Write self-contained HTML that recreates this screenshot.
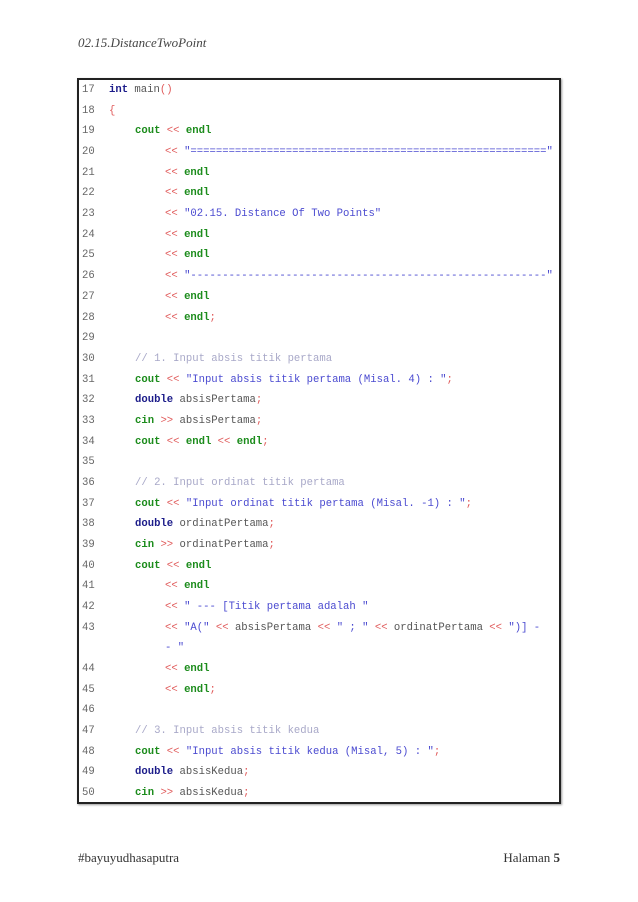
<!DOCTYPE html>
<html><head><meta charset="utf-8"><style>
body{margin:0;background:#fff;width:638px;height:902px;position:relative;overflow:hidden}
.hd{position:absolute;left:78px;top:35px;font:italic 13px "Liberation Serif",serif;color:#444}
.box{position:absolute;left:77px;top:78px;width:480px;height:722px;border:2px solid #222;box-shadow:1px 1px 2px #999}
.r{position:absolute;left:82px;height:20px;line-height:20px;font:10.6px "Liberation Mono",monospace;color:#555;white-space:pre}
.n{display:inline-block;width:27px;color:#666}
.k{color:#1c1c8a;font-weight:bold}.g{color:#1c8c1c;font-weight:bold}.o{color:#e05a5a}.s{color:#4a4ad0}.c{color:#a8a8c8}
.i1{display:inline-block;width:26px}.i2{display:inline-block;width:56px}
.ft{position:absolute;top:850px;font:13px "Liberation Serif",serif;color:#333}
</style></head><body>
<div class="hd">02.15.DistanceTwoPoint</div>
<div class="box"></div>
<div class="r" style="top:84px"><span class="n">17</span><span class="k">int</span> main<span class="o">()</span></div>
<div class="r" style="top:104.7px"><span class="n">18</span><span class="o">{</span></div>
<div class="r" style="top:125.4px"><span class="n">19</span><span class="i1"></span><span class="g">cout</span> <span class="o">&lt;&lt;</span> <span class="g">endl</span></div>
<div class="r" style="top:146px"><span class="n">20</span><span class="i2"></span><span class="o">&lt;&lt;</span> <span class="s">"========================================================"</span></div>
<div class="r" style="top:166.7px"><span class="n">21</span><span class="i2"></span><span class="o">&lt;&lt;</span> <span class="g">endl</span></div>
<div class="r" style="top:187.4px"><span class="n">22</span><span class="i2"></span><span class="o">&lt;&lt;</span> <span class="g">endl</span></div>
<div class="r" style="top:208.1px"><span class="n">23</span><span class="i2"></span><span class="o">&lt;&lt;</span> <span class="s">"02.15. Distance Of Two Points"</span></div>
<div class="r" style="top:228.8px"><span class="n">24</span><span class="i2"></span><span class="o">&lt;&lt;</span> <span class="g">endl</span></div>
<div class="r" style="top:249.4px"><span class="n">25</span><span class="i2"></span><span class="o">&lt;&lt;</span> <span class="g">endl</span></div>
<div class="r" style="top:270.1px"><span class="n">26</span><span class="i2"></span><span class="o">&lt;&lt;</span> <span class="s">"--------------------------------------------------------"</span></div>
<div class="r" style="top:290.8px"><span class="n">27</span><span class="i2"></span><span class="o">&lt;&lt;</span> <span class="g">endl</span></div>
<div class="r" style="top:311.5px"><span class="n">28</span><span class="i2"></span><span class="o">&lt;&lt;</span> <span class="g">endl</span><span class="o">;</span></div>
<div class="r" style="top:332.2px"><span class="n">29</span></div>
<div class="r" style="top:352.8px"><span class="n">30</span><span class="i1"></span><span class="c">// 1. Input absis titik pertama</span></div>
<div class="r" style="top:373.5px"><span class="n">31</span><span class="i1"></span><span class="g">cout</span> <span class="o">&lt;&lt;</span> <span class="s">"Input absis titik pertama (Misal. 4) : "</span><span class="o">;</span></div>
<div class="r" style="top:394.2px"><span class="n">32</span><span class="i1"></span><span class="k">double</span> absisPertama<span class="o">;</span></div>
<div class="r" style="top:414.9px"><span class="n">33</span><span class="i1"></span><span class="g">cin</span> <span class="o">&gt;&gt;</span> absisPertama<span class="o">;</span></div>
<div class="r" style="top:435.6px"><span class="n">34</span><span class="i1"></span><span class="g">cout</span> <span class="o">&lt;&lt;</span> <span class="g">endl</span> <span class="o">&lt;&lt;</span> <span class="g">endl</span><span class="o">;</span></div>
<div class="r" style="top:456.2px"><span class="n">35</span></div>
<div class="r" style="top:476.9px"><span class="n">36</span><span class="i1"></span><span class="c">// 2. Input ordinat titik pertama</span></div>
<div class="r" style="top:497.6px"><span class="n">37</span><span class="i1"></span><span class="g">cout</span> <span class="o">&lt;&lt;</span> <span class="s">"Input ordinat titik pertama (Misal. -1) : "</span><span class="o">;</span></div>
<div class="r" style="top:518.3px"><span class="n">38</span><span class="i1"></span><span class="k">double</span> ordinatPertama<span class="o">;</span></div>
<div class="r" style="top:539px"><span class="n">39</span><span class="i1"></span><span class="g">cin</span> <span class="o">&gt;&gt;</span> ordinatPertama<span class="o">;</span></div>
<div class="r" style="top:559.6px"><span class="n">40</span><span class="i1"></span><span class="g">cout</span> <span class="o">&lt;&lt;</span> <span class="g">endl</span></div>
<div class="r" style="top:580.3px"><span class="n">41</span><span class="i2"></span><span class="o">&lt;&lt;</span> <span class="g">endl</span></div>
<div class="r" style="top:601px"><span class="n">42</span><span class="i2"></span><span class="o">&lt;&lt;</span> <span class="s">" --- [Titik pertama adalah "</span></div>
<div class="r" style="top:621.7px"><span class="n">43</span><span class="i2"></span><span class="o">&lt;&lt;</span> <span class="s">"A("</span> <span class="o">&lt;&lt;</span> absisPertama <span class="o">&lt;&lt;</span> <span class="s">" ; "</span> <span class="o">&lt;&lt;</span> ordinatPertama <span class="o">&lt;&lt;</span> <span class="s">")] -</span></div>
<div class="r" style="top:642.4px"><span class="n"></span><span class="i2"></span><span class="s">- "</span></div>
<div class="r" style="top:663px"><span class="n">44</span><span class="i2"></span><span class="o">&lt;&lt;</span> <span class="g">endl</span></div>
<div class="r" style="top:683.7px"><span class="n">45</span><span class="i2"></span><span class="o">&lt;&lt;</span> <span class="g">endl</span><span class="o">;</span></div>
<div class="r" style="top:704.4px"><span class="n">46</span></div>
<div class="r" style="top:725.1px"><span class="n">47</span><span class="i1"></span><span class="c">// 3. Input absis titik kedua</span></div>
<div class="r" style="top:745.8px"><span class="n">48</span><span class="i1"></span><span class="g">cout</span> <span class="o">&lt;&lt;</span> <span class="s">"Input absis titik kedua (Misal, 5) : "</span><span class="o">;</span></div>
<div class="r" style="top:766.4px"><span class="n">49</span><span class="i1"></span><span class="k">double</span> absisKedua<span class="o">;</span></div>
<div class="r" style="top:787.1px"><span class="n">50</span><span class="i1"></span><span class="g">cin</span> <span class="o">&gt;&gt;</span> absisKedua<span class="o">;</span></div>
<div class="ft" style="left:78px">#bayuyudhasaputra</div>
<div class="ft" style="right:78px">Halaman <b>5</b></div>
</body></html>
